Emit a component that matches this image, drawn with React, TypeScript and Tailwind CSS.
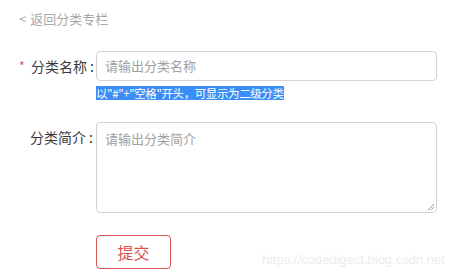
export default function App() {
  const font = { fontFamily: '"Noto Sans CJK SC", "Noto Sans", sans-serif' };
  return (
    <div className="relative w-[474px] h-[279px] bg-white overflow-hidden" style={font}>
      <div className="pl-[19px] pt-[10px] text-[13px] leading-[18px] text-[#a8a8a8] flex items-center gap-[4px]">
        <span>&lt;</span>
        <span>返回分类专栏</span>
      </div>
      <div className="mt-[23px] flex items-start">
        <div className="w-[96px] flex items-center h-[30px] pl-[19px] text-[14px] text-[#3a3a3a]">
          <span className="text-[#d9534f] text-[12px] w-[12px]">*</span>
          <span>分类名称</span>
          <span className="ml-[3px]">:</span>
        </div>
        <div className="flex flex-col">
          <div className="w-[341px] h-[30px] border border-[#d4d4d4] rounded-[4px] flex items-center pl-[8px] text-[13px] text-[#a0a0a0]">
            请输出分类名称
          </div>
          <div className="mt-[5px] self-start bg-[#3b8ef5] text-white text-[11.5px] leading-[14px]" style={{ letterSpacing: '-0.4px' }}>
            以"#"+"空格"开头，可显示为二级分类
          </div>
        </div>
      </div>
      <div className="mt-[22px] flex items-start">
        <div className="w-[96px] flex pl-[30px] pt-[5px] text-[14px] text-[#3a3a3a]">
          <span>分类简介</span>
          <span className="ml-[3px]">:</span>
        </div>
        <div className="relative w-[341px] h-[91px] border border-[#d4d4d4] rounded-[4px] pl-[8px] pt-[6px] text-[13px] text-[#a0a0a0]">
          请输出分类简介
          <svg className="absolute right-[1px] bottom-[1px]" width="9" height="9" viewBox="0 0 9 9">
            <line x1="8" y1="2" x2="2" y2="8" stroke="#999" strokeWidth="1" />
            <line x1="8" y1="5" x2="5" y2="8" stroke="#999" strokeWidth="1" />
          </svg>
        </div>
      </div>
      <div className="mt-[22px] pl-[96px]">
        <div className="w-[75px] h-[34px] border border-[#d9534f] rounded-[4px] flex items-center justify-center text-[16px] text-[#d9534f]">
          提交
        </div>
      </div>
      <div className="absolute left-[262px] top-[250px] text-[13px] text-[#ececec]" style={{ fontFamily: '"Liberation Sans", sans-serif' }}>
        https://codedigest.blog.csdn.net
      </div>
    </div>
  );
}
